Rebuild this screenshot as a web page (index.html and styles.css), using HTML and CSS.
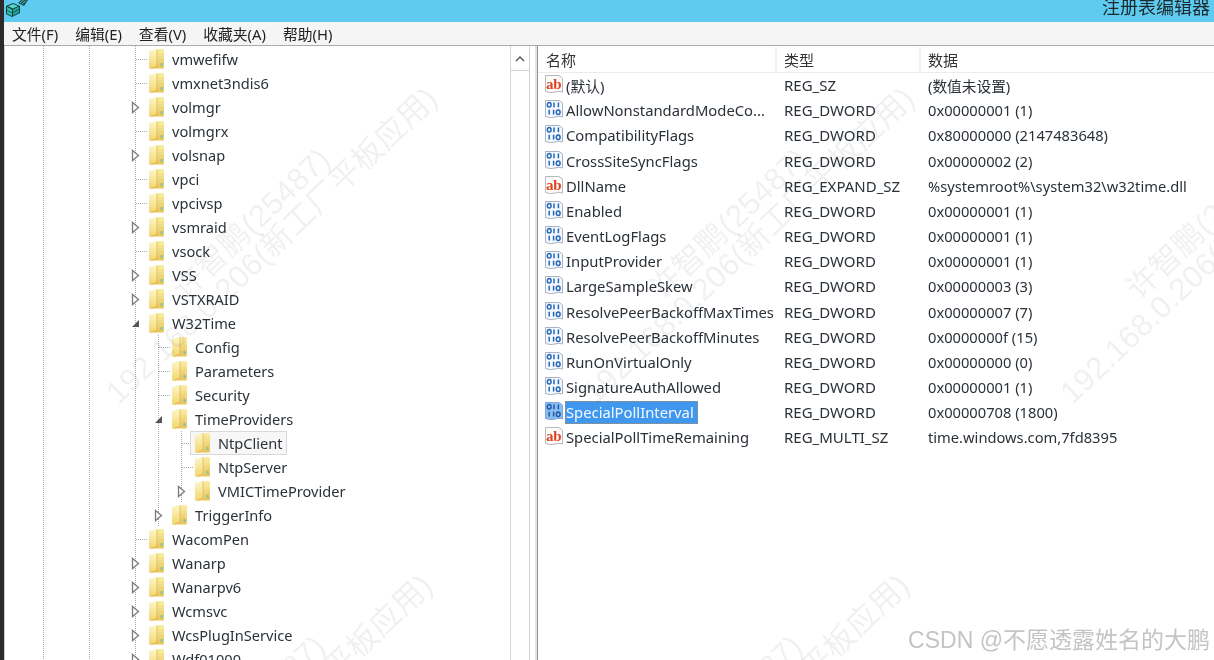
FILE: index.html
```
<!DOCTYPE html>
<html lang="zh">
<head>
<meta charset="utf-8">
<title>注册表编辑器</title>
<link rel="stylesheet" href="styles.css">
</head>
<body>
<svg class="defs" width="0" height="0" aria-hidden="true">
  <defs>
    <linearGradient id="fa" x1="0" y1="0" x2="0" y2="1"><stop offset="0" stop-color="#fdf6c8"/><stop offset="1" stop-color="#f2d66e"/></linearGradient>
    <linearGradient id="fb" x1="0" y1="0" x2="0" y2="1"><stop offset="0" stop-color="#fbeea8"/><stop offset="1" stop-color="#e8c255"/></linearGradient>
    <symbol id="folder" viewBox="0 0 17 22">
      <path d="M1 3.5 L9 1 H15 Q16 1 16 2 V19 Q16 20.5 15 20.5 H3 Q1 20.5 1 19 Z" fill="url(#fb)"/>
      <path d="M1 4 L9 1.5 V18 L3 20.5 Q1 20.5 1 19 Z" fill="url(#fa)"/>
      <path d="M9 1.5 V18 L3 20.5" fill="none" stroke="#d9b64e" stroke-width=".7"/>
      <rect x="12.5" y="15" width="2" height="3" fill="#7fc4a8"/>
    </symbol>
    <symbol id="closed" viewBox="0 0 9 13"><path d="M1.5 1.5 L7.5 6.5 L1.5 11.5 Z" fill="#fff" stroke="#7a7a7a" stroke-width="1.3"/></symbol>
    <symbol id="open" viewBox="0 0 9 13"><path d="M8 3 V10 H1 Z" fill="#555"/></symbol>
    <symbol id="page" viewBox="0 0 20 20"><path d="M1.5 1.5 H15 L18.5 4 V18 Q15 16.5 11 18 T1.5 17.5 Z" fill="#fbfbfb" stroke="#b9b9b9"/></symbol>
    <symbol id="bin" viewBox="0 0 20 20">
      <path d="M1.5 1.5 H15 L18.5 4 V18 Q15 16.5 11 18 T1.5 17.5 Z" fill="#f4f7fb" stroke="#a9b4c2"/>
      <g fill="none" stroke="#2468bc" stroke-width="1.5">
        <ellipse cx="5.2" cy="5.8" rx="1.9" ry="2.3"/><path d="M10 3.4 V8.2 M14.4 3.4 V8.2"/>
        <path d="M5.2 10.8 V15.6 M9.6 10.8 V15.6"/><ellipse cx="14.2" cy="13.2" rx="1.9" ry="2.3"/>
      </g>
    </symbol>
    <symbol id="binsel" viewBox="0 0 20 20">
      <path d="M1.5 1.5 H15 L18.5 4 V18 Q15 16.5 11 18 T1.5 17.5 Z" fill="#8cbcf0" stroke="#7aa6dc"/>
      <g fill="none" stroke="#1f5cab" stroke-width="1.5">
        <ellipse cx="5.2" cy="5.8" rx="1.9" ry="2.3"/><path d="M10 3.4 V8.2 M14.4 3.4 V8.2"/>
        <path d="M5.2 10.8 V15.6 M9.6 10.8 V15.6"/><ellipse cx="14.2" cy="13.2" rx="1.9" ry="2.3"/>
      </g>
    </symbol>
    <symbol id="regapp" viewBox="0 0 24 20">
      <path d="M1 8 L8 5 L15 8 V15 L7 19 L1 16 Z" fill="#123c44"/>
      <path d="M2 9 L7 11.5 V14.5 L2 12 Z M2 12.8 L7 15.3 V18 L2 15.5 Z" fill="#2fc0ac"/>
      <path d="M8 11.5 L14 8.5 V11 L8 14 Z M8 14.8 L14 11.8 V14.5 L8 17.5 Z" fill="#22a596"/>
      <path d="M3 8.2 L8 6 L13 8 L8 10.4 Z" fill="#56d8c6"/>
      <path d="M13 5 L18 0 L23 2 L19 8 Z" fill="#1d4a4e"/>
      <path d="M15 5 L19 1.5 M17 6 L21 2.6" stroke="#4fc5b5" stroke-width="1"/>
    </symbol>
  </defs>
</svg>

<div class="window">
  <header class="titlebar">
    <svg class="appicon"><use href="#regapp"/></svg>
    <span class="title">注册表编辑器</span>
  </header>
  <nav class="menubar">
    <span>文件(F)</span><span>编辑(E)</span><span>查看(V)</span><span>收藏夹(A)</span><span>帮助(H)</span>
  </nav>
  <main class="panes">
    <section class="tree">
      <div class="row l0 leaf"><span class="exp"></span><svg class="fold"><use href="#folder"/></svg><span>vmwefifw</span></div>
      <div class="row l0 leaf"><span class="exp"></span><svg class="fold"><use href="#folder"/></svg><span>vmxnet3ndis6</span></div>
      <div class="row l0"><svg class="exp"><use href="#closed"/></svg><svg class="fold"><use href="#folder"/></svg><span>volmgr</span></div>
      <div class="row l0 leaf"><span class="exp"></span><svg class="fold"><use href="#folder"/></svg><span>volmgrx</span></div>
      <div class="row l0"><svg class="exp"><use href="#closed"/></svg><svg class="fold"><use href="#folder"/></svg><span>volsnap</span></div>
      <div class="row l0 leaf"><span class="exp"></span><svg class="fold"><use href="#folder"/></svg><span>vpci</span></div>
      <div class="row l0 leaf"><span class="exp"></span><svg class="fold"><use href="#folder"/></svg><span>vpcivsp</span></div>
      <div class="row l0"><svg class="exp"><use href="#closed"/></svg><svg class="fold"><use href="#folder"/></svg><span>vsmraid</span></div>
      <div class="row l0 leaf"><span class="exp"></span><svg class="fold"><use href="#folder"/></svg><span>vsock</span></div>
      <div class="row l0"><svg class="exp"><use href="#closed"/></svg><svg class="fold"><use href="#folder"/></svg><span>VSS</span></div>
      <div class="row l0"><svg class="exp"><use href="#closed"/></svg><svg class="fold"><use href="#folder"/></svg><span>VSTXRAID</span></div>
      <div class="row l0"><svg class="exp"><use href="#open"/></svg><svg class="fold"><use href="#folder"/></svg><span>W32Time</span></div>
      <div class="row l1 leaf"><span class="exp"></span><svg class="fold"><use href="#folder"/></svg><span>Config</span></div>
      <div class="row l1 leaf"><span class="exp"></span><svg class="fold"><use href="#folder"/></svg><span>Parameters</span></div>
      <div class="row l1 leaf"><span class="exp"></span><svg class="fold"><use href="#folder"/></svg><span>Security</span></div>
      <div class="row l1"><svg class="exp"><use href="#open"/></svg><svg class="fold"><use href="#folder"/></svg><span>TimeProviders</span></div>
      <div class="row l2 leaf"><span class="exp"></span><span class="current"><svg class="fold"><use href="#folder"/></svg><span>NtpClient</span></span></div>
      <div class="row l2 leaf"><span class="exp"></span><svg class="fold"><use href="#folder"/></svg><span>NtpServer</span></div>
      <div class="row l2"><svg class="exp"><use href="#closed"/></svg><svg class="fold"><use href="#folder"/></svg><span>VMICTimeProvider</span></div>
      <div class="row l1"><svg class="exp"><use href="#closed"/></svg><svg class="fold"><use href="#folder"/></svg><span>TriggerInfo</span></div>
      <div class="row l0 leaf"><span class="exp"></span><svg class="fold"><use href="#folder"/></svg><span>WacomPen</span></div>
      <div class="row l0"><svg class="exp"><use href="#closed"/></svg><svg class="fold"><use href="#folder"/></svg><span>Wanarp</span></div>
      <div class="row l0"><svg class="exp"><use href="#closed"/></svg><svg class="fold"><use href="#folder"/></svg><span>Wanarpv6</span></div>
      <div class="row l0"><svg class="exp"><use href="#closed"/></svg><svg class="fold"><use href="#folder"/></svg><span>Wcmsvc</span></div>
      <div class="row l0"><svg class="exp"><use href="#closed"/></svg><svg class="fold"><use href="#folder"/></svg><span>WcsPlugInService</span></div>
      <div class="row l0"><svg class="exp"><use href="#closed"/></svg><svg class="fold"><use href="#folder"/></svg><span>Wdf01000</span></div>
    </section>
    <aside class="scroll">
      <div class="scroll-up"><svg width="10" height="6" viewBox="0 0 10 6"><path d="M1 5 L5 1 L9 5" fill="none" stroke="#555" stroke-width="1.4"/></svg></div>
    </aside>
    <section class="list">
      <div class="head"><span class="c1">名称</span><span class="c2">类型</span><span class="c3">数据</span></div>
      <div class="item"><span class="c1"><svg class="ic"><use href="#page"/></svg><b class="ab">ab</b><span>(默认)</span></span><span class="c2">REG_SZ</span><span class="c3">(数值未设置)</span></div>
      <div class="item"><span class="c1"><svg class="ic"><use href="#bin"/></svg><span>AllowNonstandardModeCo...</span></span><span class="c2">REG_DWORD</span><span class="c3">0x00000001 (1)</span></div>
      <div class="item"><span class="c1"><svg class="ic"><use href="#bin"/></svg><span>CompatibilityFlags</span></span><span class="c2">REG_DWORD</span><span class="c3">0x80000000 (2147483648)</span></div>
      <div class="item"><span class="c1"><svg class="ic"><use href="#bin"/></svg><span>CrossSiteSyncFlags</span></span><span class="c2">REG_DWORD</span><span class="c3">0x00000002 (2)</span></div>
      <div class="item"><span class="c1"><svg class="ic"><use href="#page"/></svg><b class="ab">ab</b><span>DllName</span></span><span class="c2">REG_EXPAND_SZ</span><span class="c3">%systemroot%\system32\w32time.dll</span></div>
      <div class="item"><span class="c1"><svg class="ic"><use href="#bin"/></svg><span>Enabled</span></span><span class="c2">REG_DWORD</span><span class="c3">0x00000001 (1)</span></div>
      <div class="item"><span class="c1"><svg class="ic"><use href="#bin"/></svg><span>EventLogFlags</span></span><span class="c2">REG_DWORD</span><span class="c3">0x00000001 (1)</span></div>
      <div class="item"><span class="c1"><svg class="ic"><use href="#bin"/></svg><span>InputProvider</span></span><span class="c2">REG_DWORD</span><span class="c3">0x00000001 (1)</span></div>
      <div class="item"><span class="c1"><svg class="ic"><use href="#bin"/></svg><span>LargeSampleSkew</span></span><span class="c2">REG_DWORD</span><span class="c3">0x00000003 (3)</span></div>
      <div class="item"><span class="c1"><svg class="ic"><use href="#bin"/></svg><span>ResolvePeerBackoffMaxTimes</span></span><span class="c2">REG_DWORD</span><span class="c3">0x00000007 (7)</span></div>
      <div class="item"><span class="c1"><svg class="ic"><use href="#bin"/></svg><span>ResolvePeerBackoffMinutes</span></span><span class="c2">REG_DWORD</span><span class="c3">0x0000000f (15)</span></div>
      <div class="item"><span class="c1"><svg class="ic"><use href="#bin"/></svg><span>RunOnVirtualOnly</span></span><span class="c2">REG_DWORD</span><span class="c3">0x00000000 (0)</span></div>
      <div class="item"><span class="c1"><svg class="ic"><use href="#bin"/></svg><span>SignatureAuthAllowed</span></span><span class="c2">REG_DWORD</span><span class="c3">0x00000001 (1)</span></div>
      <div class="item"><span class="c1"><svg class="ic"><use href="#binsel"/></svg><span class="sel">SpecialPollInterval</span></span><span class="c2">REG_DWORD</span><span class="c3">0x00000708 (1800)</span></div>
      <div class="item"><span class="c1"><svg class="ic"><use href="#page"/></svg><b class="ab">ab</b><span>SpecialPollTimeRemaining</span></span><span class="c2">REG_MULTI_SZ</span><span class="c3">time.windows.com,7fd8395</span></div>
    </section>
  </main>
</div>

<div class="marks" aria-hidden="true">
  <div class="wm a"><p class="who">许智鹏(25487)</p><p>192.168.0.206(新工厂平板应用)</p></div>
  <div class="wm b"><p class="who">许智鹏(25487)</p><p>192.168.0.206(新工厂平板应用)</p></div>
  <div class="wm c"><p class="who">许智鹏(25487)</p><p>192.168.0.206(新工厂平板应用)</p></div>
  <div class="wm d"><p class="who">许智鹏(25487)</p><p>192.168.0.206(新工厂平板应用)</p></div>
  <div class="wm e"><p class="who">许智鹏(25487)</p><p>192.168.0.206(新工厂平板应用)</p></div>
</div>
<div class="csdn">CSDN @不愿透露姓名的大鹏</div>
</body>
</html>
```
FILE: styles.css
```
* { box-sizing: border-box; }
html, body { margin: 0; height: 100%; overflow: hidden; }
body {
  width: 1214px; height: 660px; position: relative; background: #2e2a2a;
  font-family: "Noto Sans", "Noto Sans CJK SC", sans-serif; font-size: 14.6px; color: #2a3138;
  filter: blur(.35px);
}
.defs { position: absolute; }
.window { margin-left: 4px; height: 660px; display: flex; flex-direction: column; background: #fff; overflow: hidden; }
.titlebar { height: 22px; flex: none; background: #5fcbef; display: flex; align-items: flex-start; justify-content: space-between; padding-left: 1px; overflow: hidden; }
.appicon { width: 24px; height: 20px; margin-top: -2px; }
.title { font-size: 18px; line-height: 18px; margin-top: -2px; color: #1c2a30; padding-right: 4px; }
.menubar { height: 24px; flex: none; display: flex; gap: 17px; padding-left: 8px; align-items: center; background: #f5f5f5; border-bottom: 1px solid #aaa; font-size: 14.8px; color: #222; }
.panes { flex: 1; display: flex; min-height: 0; }
.tree {
  width: 506px; flex: none; overflow: hidden; padding-top: 1px; border-left: 1px solid #d0d0d0;
  background-image: linear-gradient(#aaa 1px, transparent 1px), linear-gradient(#aaa 1px, transparent 1px), linear-gradient(#aaa 1px, transparent 1px);
  background-size: 1px 2px; background-repeat: repeat-y;
  background-position: 38px 0, 84px 0, 130px 0;
}
.row { height: 24px; display: flex; align-items: center; white-space: nowrap; }
.l0 { padding-left: 126px; }
.l1 { padding-left: 149px; }
.l2 { padding-left: 172px; }
.l1, .l2 { background-image: linear-gradient(#aaa 1px, transparent 1px); background-size: 1px 2px; background-repeat: repeat-y; background-position: 153px 0; }
.l2 { background-image: linear-gradient(#aaa 1px, transparent 1px), linear-gradient(#aaa 1px, transparent 1px); background-position: 153px 0, 176px 0; }
.exp { width: 9px; height: 13px; flex: none; margin-right: 8px; }
.leaf .exp { background: repeating-linear-gradient(90deg, #aaa 0 1px, transparent 1px 2px) 5px 6px / 11px 1px no-repeat; width: 17px; margin-right: 0; }
.fold { width: 17px; height: 22px; flex: none; margin-right: 7px; }
.current { display: flex; align-items: center; border: 1px solid #d9d9d9; background: #f7f7f7; margin-left: -4px; padding: 0 3px 0 3px; height: 24px; }
.scroll { width: 20px; flex: none; background: #fff; border-left: 1px solid #d4d4d4; border-right: 1px solid #d4d4d4; }
.scroll-up { height: 23px; border-bottom: 1px solid #d4d4d4; display: flex; align-items: center; justify-content: center; margin: 2px 0 0; }
.list { flex: 1; margin-left: 7px; padding-top: 1px; border-left: 1px solid #8f8f8f; box-shadow: -2px 0 0 #e4e4e4; overflow: hidden; font-size: 14.8px; }
.head { height: 25.5px; display: flex; align-items: center; background: #fff; border-bottom: 1px solid #ececec; font-size: 15px; color: #333; }
.head span { height: 100%; line-height: 26px; border-right: 2px solid #f0f0f0; }
.head .c3 { border-right: 0; }
.c1 { width: 246px; flex: none; padding-left: 6px; display: flex; align-items: center; position: relative; }
.c2 { width: 144px; flex: none; font-size: 15px; }
.c3 { flex: 1; font-size: 14.7px; }
.head .c2, .head .c3 { padding-left: 7px; font-size: 15px; }
.head .c1 { display: block; width: 239px; padding-left: 8px; }
.head .c2 { width: 144px; }
.item { height: 25.18px; display: flex; align-items: center; white-space: nowrap; }
.ic { width: 20px; height: 20px; flex: none; margin-right: 2px; margin-top: -2px; }
.ab { position: absolute; left: 8px; top: 2px; font: bold 15px/14px "Liberation Serif", serif; color: #e0421e; letter-spacing: -.3px; }
.sel { background: #3f97ee; color: #f3f9ff; outline: 1px dotted #b98a5a; outline-offset: -1px; height: 23px; line-height: 22px; padding: 0 4px 0 1px; margin-left: -1px; }
.marks { position: absolute; inset: 0; pointer-events: none; overflow: hidden; }
.wm { position: absolute; width: 520px; transform: rotate(-43.5deg); transform-origin: 0 100%; font-size: 31px; line-height: 30px; letter-spacing: .3px; color: rgba(0,0,0,.06); white-space: nowrap; font-family: "Liberation Sans", "Noto Sans CJK SC", sans-serif; }
.wm p { margin: 0; }
.wm .who { margin-left: 120px; }
.wm.a { left: 122px; top: 349px; }
.wm.b { left: 599px; top: 349px; }
.wm.c { left: 1076px; top: 349px; }
.wm.d { left: 117px; top: 836px; }
.wm.e { left: 594px; top: 836px; }
.csdn { position: absolute; right: 4px; bottom: 6px; font-size: 23px; line-height: 28px; color: #c4c4c4; font-family: "Liberation Sans", "Noto Sans CJK SC", sans-serif; }
```
